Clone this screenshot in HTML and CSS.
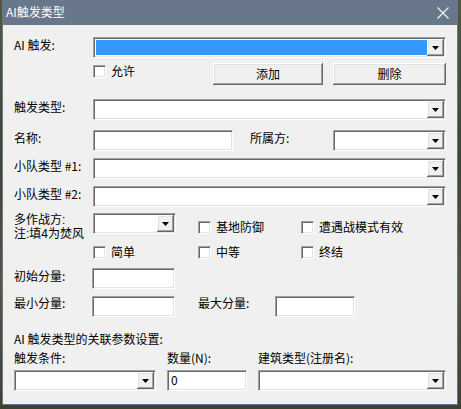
FILE: index.html
```html
<!DOCTYPE html>
<html>
<head>
<meta charset="utf-8">
<link rel="stylesheet" href="styles.css">
</head>
<body>
<div class="win">
  <div class="titlebar">
    <span class="title">AI触发类型</span>
    <svg class="close" width="12" height="12" viewBox="0 0 12 12"><path d="M0.5 0.5 L11.5 11.5 M11.5 0.5 L0.5 11.5" stroke="#f2f4f6" stroke-width="1.2" fill="none"/></svg>
  </div>
  <div class="body">
    <div class="row r-main">
      <span class="lbl">AI 触发:</span>
      <div class="sunk combo"><div class="sel"></div><div class="dd"><i></i></div></div>
    </div>
    <div class="row r-btns">
      <span></span>
      <div class="chk top"><span class="cb"></span><span>允许</span></div>
      <button class="btn">添加</button>
      <button class="btn del">删除</button>
    </div>
    <div class="row r-main gap14">
      <span class="lbl">触发类型:</span>
      <div class="sunk combo"><div class="dd"><i></i></div></div>
    </div>
    <div class="row r-name gap10">
      <span class="lbl">名称:</span>
      <div class="sunk"></div>
      <span></span>
      <span class="lbl">所属方:</span>
      <div class="sunk combo"><div class="dd"><i></i></div></div>
    </div>
    <div class="row r-main gap7">
      <span class="lbl">小队类型 #1:</span>
      <div class="sunk combo"><div class="dd"><i></i></div></div>
    </div>
    <div class="row r-main gap7">
      <span class="lbl">小队类型 #2:</span>
      <div class="sunk combo"><div class="dd"><i></i></div></div>
    </div>
    <div class="row r-tri gap6">
      <div class="lbl two"><div>多作战方:</div><div>注:填4为焚风</div></div>
      <div class="sunk combo small"><div class="dd"><i></i></div></div>
      <div class="chk"><span class="cb"></span><span>基地防御</span></div>
      <div class="chk"><span class="cb"></span><span>遭遇战模式有效</span></div>
    </div>
    <div class="row r-tri r-checks">
      <span></span>
      <div class="chk"><span class="cb"></span><span>简单</span></div>
      <div class="chk"><span class="cb"></span><span>中等</span></div>
      <div class="chk"><span class="cb"></span><span>终结</span></div>
    </div>
    <div class="row r-amt gap10">
      <span class="lbl">初始分量:</span>
      <div class="sunk"></div>
    </div>
    <div class="row r-amt2 gap7">
      <span class="lbl">最小分量:</span>
      <div class="sunk"></div>
      <span></span>
      <span class="lbl">最大分量:</span>
      <div class="sunk"></div>
    </div>
    <div class="section">AI 触发类型的关联参数设置:</div>
    <div class="r-bottom sub">
      <span>触发条件:</span>
      <span>数量(N):</span>
      <span>建筑类型(注册名):</span>
    </div>
    <div class="r-bottom ctrls">
      <div class="sunk combo"><div class="dd"><i></i></div></div>
      <div class="sunk edit-val">0</div>
      <div class="sunk combo"><div class="dd"><i></i></div></div>
    </div>
  </div>
</div>
</body>
</html>
```
FILE: styles.css
```css
html, body {
  margin: 0;
  padding: 0;
}
body {
  width: 461px;
  height: 409px;
  overflow: hidden;
  background: linear-gradient(180deg, #4f5a3c 0%, #3d4631 40%, #5a5440 70%, #3b4230 100%);
  font: 12px/14px "Noto Sans CJK SC", "Liberation Sans", sans-serif;
  color: #000;
}
.win {
  margin-left: 2px;
  width: 456px;
  height: 405px;
  box-sizing: border-box;
  background: #687789;
  padding: 0 1px 1px 1px;
  display: flex;
  flex-direction: column;
}
.titlebar {
  height: 25px;
  flex: none;
  display: flex;
  align-items: center;
  justify-content: space-between;
  padding: 0 8px 0 3px;
  color: #fff;
}
.title {
  font-size: 12px;
  line-height: 14px;
  margin-top: -1px;
}
.close {
  display: block;
  margin-top: 1px;
}
.body {
  flex: 1;
  background: #f0f0f0;
  padding: 12px 11px 0 11px;
}
.row {
  display: grid;
  height: 21px;
}
.gap14 { margin-top: 14px; }
.gap10 { margin-top: 10px; }
.gap7 { margin-top: 7px; }
.gap6 { margin-top: 6px; }
.lbl {
  padding-top: 1px;
  white-space: nowrap;
}
.lbl.two {
  font-family: "Liberation Sans", "Noto Sans CJK SC", sans-serif;
  line-height: 14px;
  padding-top: 0;
}
.lbl.two div {
  height: 14px;
}
.r-main { grid-template-columns: 79px 1fr; }
.r-btns {
  grid-template-columns: 79px 120px 110px 1fr;
  height: 22px;
  margin-top: 5px;
}
.r-name { grid-template-columns: 79px 140px 17px 83px 1fr; }
.r-tri { grid-template-columns: 79px 105px 103px 1fr; }
.r-tri .small { width: 83px; }
.r-checks {
  height: 13px;
  margin-top: 11px;
}
.r-amt { grid-template-columns: 78px 83px; }
.r-amt2 { grid-template-columns: 78px 83px 23px 77px 80px; }
.r-amt2 .lbl { padding-top: 0; }

.sunk {
  box-sizing: border-box;
  height: 21px;
  background: #fff;
  border: 1px solid;
  border-color: #a0a0a0 #ffffff #ffffff #a0a0a0;
  box-shadow: inset 1px 1px 0 #696969, inset -1px -1px 0 #e3e3e3;
}
.combo {
  display: flex;
  justify-content: flex-end;
  padding: 1px;
}
.sel {
  flex: 1;
  background: #3399ff;
  margin: 1px 0 1px 1px;
}
.dd {
  width: 17px;
  height: 17px;
  box-sizing: border-box;
  background: #f0f0f0;
  box-shadow: inset -1px -1px 0 #696969, inset 1px 1px 0 #ffffff, inset -2px -2px 0 #a0a0a0, inset 2px 2px 0 #e3e3e3;
  display: flex;
  align-items: center;
  justify-content: center;
}
.dd i {
  display: block;
  width: 7px;
  height: 4px;
  background: #000;
  clip-path: polygon(0 0, 100% 0, 50% 100%);
  margin: 1px 0 0 0;
}
.chk {
  display: flex;
  align-items: center;
  gap: 5px;
  white-space: nowrap;
}
.chk.top {
  align-self: start;
  margin-top: 1px;
}
.cb {
  width: 13px;
  height: 13px;
  box-sizing: border-box;
  background: #fff;
  border: 1px solid;
  border-color: #a0a0a0 #ffffff #ffffff #a0a0a0;
  box-shadow: inset 1px 1px 0 #696969, inset -1px -1px 0 #e3e3e3;
  flex: none;
}
.btn {
  height: 22px;
  padding: 0;
  margin: 0;
  border: none;
  background: #f0f0f0;
  font: inherit;
  color: #000;
  box-shadow: inset -1px -1px 0 #696969, inset 1px 1px 0 #ffffff, inset -2px -2px 0 #a0a0a0, inset 2px 2px 0 #e3e3e3;
}
.btn.del {
  width: 113px;
  justify-self: end;
}
.section {
  margin-top: 15px;
  white-space: nowrap;
}
.r-bottom {
  display: grid;
  grid-template-columns: 142px 80px 1fr;
  column-gap: 11px;
}
.sub {
  margin-top: 5px;
}
.ctrls {
  margin-top: 5px;
}
.edit-val {
  padding: 2px 0 0 3px;
  line-height: 14px;
}
```
